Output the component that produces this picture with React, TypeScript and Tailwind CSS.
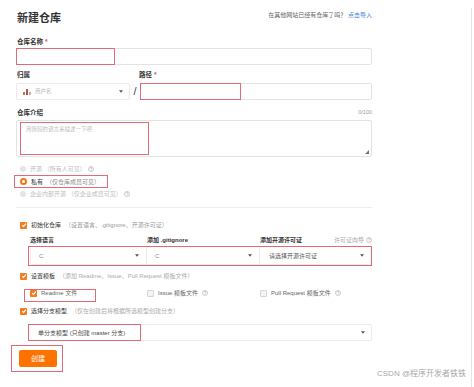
import React from "react";

const red = "pointer-events-none absolute border-[1.5px] border-[#e06a78]";

function Check() {
  return (
    <span className="inline-flex h-[7px] w-[7px] shrink-0 items-center justify-center rounded-[1px] bg-[#f57b20]">
      <svg viewBox="0 0 10 10" className="h-[6px] w-[6px]">
        <path d="M2 5.2 L4.2 7.4 L8.2 2.8" fill="none" stroke="white" strokeWidth="1.8" />
      </svg>
    </span>
  );
}

function EmptyCheck() {
  return <span className="inline-block h-[7px] w-[7px] shrink-0 rounded-[1px] border border-[#d6d6d6] bg-[#f4f4f4]" />;
}

function Help() {
  return (
    <svg viewBox="0 0 12 12" className="h-[6px] w-[6px] shrink-0">
      <circle cx="6" cy="6" r="5" fill="none" stroke="#9a9a9a" strokeWidth="1" />
      <path d="M4.5 4.6 A1.6 1.6 0 1 1 6.6 6.1 L6 6.6 L6 7.4" fill="none" stroke="#9a9a9a" strokeWidth="1" />
      <circle cx="6" cy="8.9" r="0.6" fill="#9a9a9a" />
    </svg>
  );
}

function Caret() {
  return (
    <svg viewBox="0 0 6 4" className="h-[3px] w-[4px] shrink-0">
      <path d="M0 0 L6 0 L3 4 Z" fill="#555" />
    </svg>
  );
}

export default function App() {
  return (
    <div className="relative h-[387px] w-[474px] overflow-hidden bg-white font-['Liberation_Sans','Noto_Sans_CJK_SC',sans-serif] text-[#40485b]">
      <div className="h-[379px] w-[472px] border-r border-[#e4e4e4]">
        <div className="w-[372px] pl-4">
          {/* title row */}
          <div className="mt-[8px] flex h-[20px] items-center justify-between">
            <div className="pl-[1px] text-[11px] font-bold leading-none text-[#333]">新建仓库</div>
            <div className="-mt-[6px] text-[6px] leading-none text-[#666]">
              在其他网站已经有仓库了吗？ <span className="text-[#4a86d0]">点击导入</span>
            </div>
          </div>

          {/* repo name */}
          <div className="mt-[9px] flex h-[10px] items-center pl-[1px] text-[6.5px] font-bold leading-none text-[#333]">
            仓库名称<span className="ml-[2px] text-[#e5484d]">*</span>
          </div>
          <div className="relative mt-[1px] h-[17px] rounded-[2px] border border-[#e3e3e3]">
            <div className={red + " -left-[1px] -top-[1px] h-[17px] w-[99px]"} />
          </div>

          {/* owner / path */}
          <div className="mt-[5px] flex h-[10px] items-center text-[6.5px] font-bold leading-none text-[#333]">
            <div className="w-[123px] pl-[1px]">归属</div>
            <div>
              路径<span className="ml-[2px] text-[#e5484d]">*</span>
            </div>
          </div>
          <div className="mt-[3px] flex h-[17px] items-center">
            <div className="flex h-[17px] w-[114px] items-center rounded-[2px] border border-[#ececec] pl-[6px] pr-[6px]">
              <span className="flex items-end gap-[1px]">
                <span className="h-[3px] w-[2px] bg-[#c96a5c]" />
                <span className="h-[6px] w-[2px] bg-[#a8574c]" />
                <span className="h-[3px] w-[2px] bg-[#d9a8a0]" />
              </span>
              <span className="ml-[4px] text-[5.5px] leading-none text-[#b8b8b8]">用户名</span>
              <span className="flex-1" />
              <Caret />
            </div>
            <div className="w-[10px] text-center text-[11px] leading-none text-[#444]">/</div>
            <div className="relative h-[17px] flex-1 rounded-[2px] border border-[#e3e3e3]">
              <div className={red + " -left-[1px] -top-[1px] h-[17px] w-[101px]"} />
            </div>
          </div>

          {/* description */}
          <div className="mt-[8px] flex h-[10px] items-center justify-between text-[6.5px] leading-none">
            <span className="pl-[1px] font-bold text-[#333]">仓库介绍</span>
            <span className="text-[5.5px] text-[#999]">0/100</span>
          </div>
          <div className="relative mt-[2px] h-[37px] rounded-[2px] border border-[#e3e3e3]">
            <div className="pl-[9px] pt-[6px] text-[5.5px] leading-none text-[#bdbdbd]">用简短的语言来描述一下吧</div>
            <svg viewBox="0 0 6 6" className="absolute bottom-[2px] right-[2px] h-[4px] w-[4px]">
              <path d="M6 0 L6 6 L0 6 Z" fill="#777" />
            </svg>
            <div className={red + " left-[3px] top-[1px] h-[33px] w-[129px]"} />
          </div>

          {/* radios */}
          <div className="mt-[6px] text-[6px] leading-none">
            <div className="flex h-[12px] items-center pl-[4px] text-[#bdbdbd]">
              <span className="h-[6px] w-[6px] rounded-full bg-[#e4e4e4]" />
              <span className="ml-[4px]">开源 （所有人可见）</span>
              <span className="ml-[2px]"><Help /></span>
            </div>
            <div className="relative flex h-[13px] items-center pl-[4px]">
              <span className="h-[7px] w-[7px] rounded-full border-[2px] border-[#f5731f] bg-white" />
              <span className="ml-[4px] text-[#333]">私有</span>
              <span className="ml-[3px] text-[#8c8c8c]">（仅仓库成员可见）</span>
              <div className={red + " -left-[2px] top-0 h-[13px] w-[94px]"} />
            </div>
            <div className="flex h-[12px] items-center pl-[4px] text-[#bdbdbd]">
              <span className="h-[6px] w-[6px] rounded-full bg-[#e4e4e4]" />
              <span className="ml-[4px]">企业内部开源 （仅企业成员可见）</span>
              <span className="ml-[2px]"><Help /></span>
            </div>
          </div>

          <div className="mt-[7px] border-t border-[#eeeeee]" />

          {/* init repo */}
          <div className="mt-[11px] flex h-[12px] items-center gap-[4px] pl-[4px] text-[6px] leading-none">
            <Check />
            <span className="text-[#333]">初始化仓库</span>
            <span className="text-[#999]">（设置语言、.gitignore、开源许可证）</span>
          </div>
          <div className="mt-[4px] grid h-[10px] grid-cols-[117px_113px_1fr] items-center pl-[14px] text-[6px] font-bold leading-none text-[#333]">
            <span>选择语言</span>
            <span>添加 .gitignore</span>
            <span className="flex items-center justify-between">
              <span>添加开源许可证</span>
              <span className="flex items-center gap-[2px] font-normal text-[#aaa]">许可证向导 <Help /></span>
            </span>
          </div>
          <div className="relative mt-[1px] pl-[14px]">
            <div className="grid h-[19px] grid-cols-[117px_113px_1fr] text-[6px] leading-none">
              <div className="flex items-center border border-[#ececec] pl-[8px] pr-[7px] text-[#888]">
                C<span className="flex-1" /><Caret />
              </div>
              <div className="flex items-center border-y border-r border-[#ececec] pl-[8px] pr-[7px] text-[#888]">
                C<span className="flex-1" /><Caret />
              </div>
              <div className="flex items-center border-y border-r border-[#ececec] pl-[9px] pr-[7px] text-[#555]">
                请选择开源许可证<span className="flex-1" /><Caret />
              </div>
            </div>
            <div className={red + " left-[12px] top-0 h-[20px] w-[344px]"} />
          </div>

          {/* template */}
          <div className="mt-[5px] flex h-[12px] items-center gap-[4px] pl-[4px] text-[6px] leading-none">
            <Check />
            <span className="text-[#333]">设置模板</span>
            <span className="text-[#aaa]">（添加 Readme、Issue、Pull Request 模板文件）</span>
          </div>
          <div className="mt-[5px] grid h-[12px] grid-cols-[117px_113px_1fr] items-center pl-[14px] text-[6px] leading-none text-[#666]">
            <div className="relative flex items-center gap-[4px]">
              <Check />
              <span>Readme 文件</span>
              <div className={red + " -left-[6px] -top-[1px] h-[13px] w-[72px]"} />
            </div>
            <div className="flex items-center gap-[4px]">
              <EmptyCheck />
              <span>Issue 模板文件</span>
              <Help />
            </div>
            <div className="flex items-center gap-[4px]">
              <EmptyCheck />
              <span>Pull Request 模板文件</span>
              <Help />
            </div>
          </div>

          {/* branch model */}
          <div className="mt-[6px] flex h-[12px] items-center gap-[4px] pl-[4px] text-[6px] leading-none">
            <Check />
            <span className="text-[#333]">选择分支模型</span>
            <span className="text-[#aaa]">（仅在创建后将根据所选模型创建分支）</span>
          </div>
          <div className="relative ml-[12px] mt-[7px] flex h-[17px] items-center rounded-[2px] border border-[#ececec] pl-[9px] pr-[6px] text-[6px] leading-none text-[#444]">
            单分支模型 (只创建 master 分支)
            <span className="flex-1" />
            <Caret />
            <div className={red + " -left-[1px] -top-[1px] h-[17px] w-[113px]"} />
          </div>

          {/* create button */}
          <div className="relative ml-[3px] mt-[9px] flex h-[17px] w-[38px] items-center justify-center rounded-[2px] bg-[#fe7300] text-[7px] leading-none text-white">
            创建
            <div className={red + " -left-[8px] -top-[5px] h-[27px] w-[52px]"} />
          </div>
        </div>
      </div>

      {/* watermark */}
      <div className="absolute bottom-[9px] right-[8px] text-[8px] leading-none text-[#a8a8a8]">CSDN @程序开发者铁铁</div>

      {/* bottom strip */}
      <div className="flex h-[8px] items-center gap-[6px] bg-[#ececec] pl-[2px] text-[6px] leading-[8px] text-[#b0b0b0]">
        <span>申请开源 | 常见问题 | 帮助中心</span>
        <span>使用条款 · 隐私政策</span>
      </div>
    </div>
  );
}
